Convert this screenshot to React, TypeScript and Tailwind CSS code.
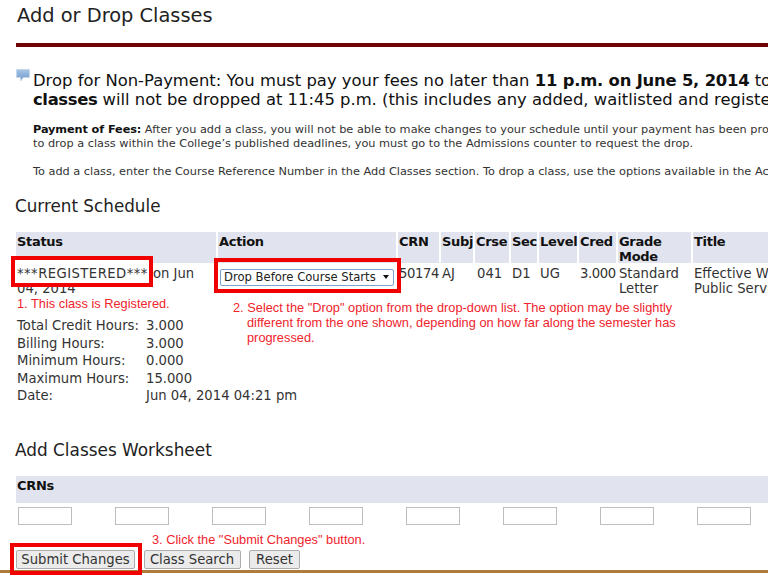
const sans = "font-['DejaVu_Sans','Verdana',sans-serif]";

function Th({ children, className = "" }: { children?: React.ReactNode; className?: string }) {
  return <div className={"bg-[#e1e4ee] px-[1px] pt-[2px] text-[13px] leading-[15px] font-bold tracking-[-0.3px] text-[#111] " + className}>{children}</div>;
}
function Td({ children, className = "" }: { children?: React.ReactNode; className?: string }) {
  return <div className={"px-[1px] pt-[3px] text-[13.2px] leading-[15px] text-[#333] " + className}>{children}</div>;
}
function Note({ children, className = "" }: { children: React.ReactNode; className?: string }) {
  return <div className={"absolute font-['Liberation_Sans',sans-serif] text-[12.8px] leading-[15px] text-[#f0242c] " + className}>{children}</div>;
}
function RedBox({ className, children }: { className: string; children?: React.ReactNode }) {
  return <div className={"absolute border-[4px] border-[#f00000] " + className}>{children}</div>;
}
const hours: [string, string][] = [
  ["Total Credit Hours:", "3.000"],
  ["Billing Hours:", "3.000"],
  ["Minimum Hours:", "0.000"],
  ["Maximum Hours:", "15.000"],
  ["Date:", "Jun 04, 2014 04:21 pm"],
];
const buttons: [string, string][] = [
  ["Submit Changes", "w-[119px]"],
  ["Class Search", "w-[97px]"],
  ["Reset", "w-[51px]"],
];

export default function App() {
  return (
    <div className={"relative h-[576px] w-[768px] overflow-hidden bg-white " + sans}>
      <div className="w-[1100px] pl-[16px]">
        <h1 className="pl-[1px] pt-[4px] text-[19.4px] leading-[24px] text-[#222]">Add or Drop Classes</h1>
        <div className="mt-[15px] h-[4px] bg-[#6e0303]" />
        <div className="relative mt-[24px] pl-[17px] text-[16.4px] leading-[19px] text-[#111]">
          <svg className="absolute left-0 top-[-2px]" width="14" height="13" viewBox="0 0 14 13">
            <defs>
              <linearGradient id="bubble" x1="0" y1="0" x2="0" y2="1">
                <stop offset="0" stopColor="#a9c6e6" />
                <stop offset="1" stopColor="#6b97c9" />
              </linearGradient>
            </defs>
            <path d="M0.5 0.5H13.5V8.5H7.5L4.5 12V8.5H0.5Z" fill="url(#bubble)" stroke="#c3d6ea" />
          </svg>
          <div className="whitespace-nowrap">
            Drop for Non-Payment: You must pay your fees no later than <b className="tracking-[-0.2px]">11 p.m. on June 5, 2014</b> to avoid being dropped.
          </div>
          <div className="whitespace-nowrap">
            <b className="tracking-[-0.35px]">classes</b> will not be dropped at 11:45 p.m. (this includes any added, waitlisted and registered classes).
          </div>
        </div>
        <div className="mt-[14px] pl-[17px] text-[11.3px] leading-[14px] text-[#333] whitespace-nowrap">
          <div><b className="text-[#111] tracking-[-0.1px]">Payment of Fees:</b> After you add a class, you will not be able to make changes to your schedule until your payment has been processed.</div>
          <div>to drop a class within the College’s published deadlines, you must go to the Admissions counter to request the drop.</div>
          <div className="mt-[14px]">To add a class, enter the Course Reference Number in the Add Classes section. To drop a class, use the options available in the Action column.</div>
        </div>

        <h2 className="-ml-[1px] mt-[16px] text-[16.8px] leading-[22px] text-[#222]">Current Schedule</h2>

        <div className="mt-[15px] grid grid-cols-[200px_178px_41px_32px_34px_26px_38px_37px_73px_200px] gap-x-[2px]">
          <Th>Status</Th>
          <Th>Action</Th>
          <Th>CRN</Th>
          <Th>Subj</Th>
          <Th>Crse</Th>
          <Th>Sec</Th>
          <Th>Level</Th>
          <Th>Cred</Th>
          <Th className="h-[31px]">Grade Mode</Th>
          <Th>Title</Th>
          <Td>
            <span className="inline-block w-[136px]" />on Jun 04, 2014
          </Td>
          <Td>
            <div className="relative ml-[1px] mt-[3px] h-[17px] w-[174px]">
              <select className="h-full w-full appearance-none rounded-[2px] border border-[#7da2ce] bg-white pl-[3px] text-[11.6px] leading-[13px] text-[#222]">
                <option>Drop Before Course Starts</option>
              </select>
              <svg className="pointer-events-none absolute right-[5px] top-[6px]" width="6" height="4" viewBox="0 0 6 4">
                <path d="M0 0H6L3 4Z" fill="#111" />
              </svg>
            </div>
          </Td>
          <Td className="tracking-[-0.4px]">50174</Td>
          <Td>AJ</Td>
          <Td className="pl-[2px]">041</Td>
          <Td>D1</Td>
          <Td>UG</Td>
          <Td className="pl-[1px] tracking-[-0.4px]">3.000</Td>
          <Td>Standard Letter</Td>
          <Td className="whitespace-nowrap">Effective Writing for<br />Public Service</Td>
        </div>

        <div className="mt-[21px] grid grid-cols-[129px_1fr] pl-[1px] text-[13.2px] leading-[17.6px] text-[#333]">
          {hours.map(([a, b]) => (
            <div key={a} className="contents">
              <div className="whitespace-nowrap">{a}</div>
              <div>{b}</div>
            </div>
          ))}
        </div>

        <h2 className="-ml-[1px] mt-[34px] text-[16.9px] leading-[22px] text-[#222]">Add Classes Worksheet</h2>

        <div className="mt-[15px] h-[27px] bg-[#e1e4ee] px-[1px] pt-[2px] text-[13px] leading-[15px] font-bold tracking-[-0.3px] text-[#111]">CRNs</div>
        <div className="mt-[4px] flex gap-[43px] pl-[2px]">
          {[0, 1, 2, 3, 4, 5, 6, 7].map((i) => (
            <input key={i} className="h-[18px] w-[54px] border border-[#bdbdbd] bg-white" />
          ))}
        </div>

        <div className="mt-[25px] flex gap-[8.5px]">
          {buttons.map(([t, w]) => (
            <button key={t} className={"h-[19px] rounded-[2px] border border-[#acacac] bg-[#ebebeb] text-[13.2px] leading-[15px] text-[#333] " + w}>
              {t}
            </button>
          ))}
        </div>
        <div className="-ml-[16px] mt-[1px] h-[3px] bg-[#ad7c3b]" />
      </div>

      <RedBox className="left-[11px] top-[256px] h-[31px] w-[142px] bg-white">
        <div className="pl-[2px] pt-[6px] text-[13.2px] leading-[15px] tracking-[0.45px] whitespace-nowrap text-[#333]">***REGISTERED***</div>
      </RedBox>
      <RedBox className="left-[214px] top-[258px] h-[35px] w-[187px]" />
      <RedBox className="left-[10px] top-[543px] h-[32px] w-[132px]" />
      <Note className="left-[17px] top-[296px]">1. This class is Registered.</Note>
      <Note className="left-[233px] top-[300px] w-[460px]">
        <div className="whitespace-nowrap">2. Select the "Drop" option from the drop-down list. The option may be slightly</div>
        <div className="whitespace-nowrap pl-[14px]">different from the one shown, depending on how far along the semester has</div>
        <div className="whitespace-nowrap pl-[14px]">progressed.</div>
      </Note>
      <Note className="left-[152px] top-[532px]">3. Click the "Submit Changes" button.</Note>
    </div>
  );
}
